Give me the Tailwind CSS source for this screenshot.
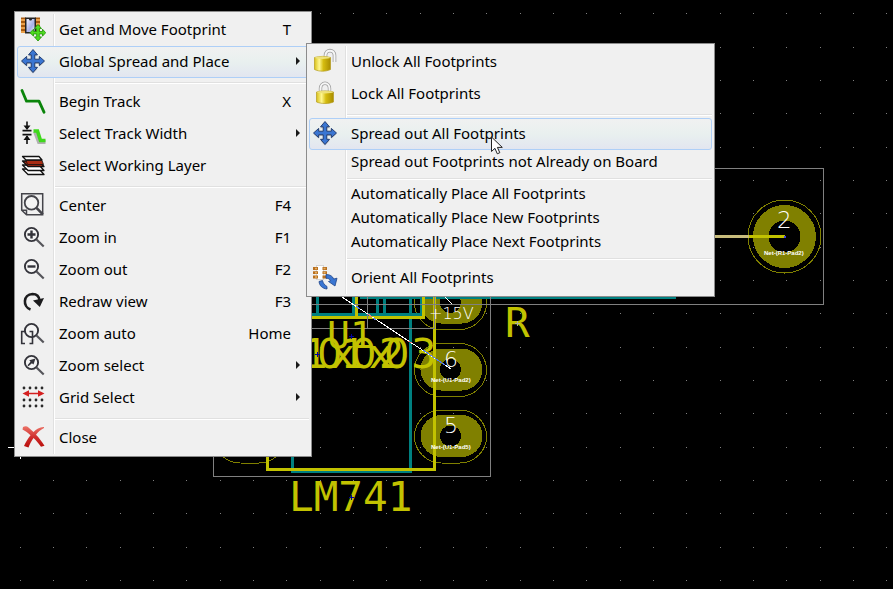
<!DOCTYPE html>
<html lang="en">
<head>
<meta charset="utf-8">
<title>Board editor</title>
<script src="https://cdn.jsdelivr.net/npm/@tailwindcss/browser@4"></script>
</head>
<body class="relative min-h-screen overflow-hidden bg-black font-['Noto_Sans','Open_Sans',sans-serif] text-[15px] text-black">

<!-- Board canvas -->
<svg class="absolute inset-0 h-full w-full" shape-rendering="crispEdges" aria-label="Board canvas">
  <defs>
    <pattern id="grid" width="100" height="100" patternUnits="userSpaceOnUse">
      <g fill="#808080">
        <rect x="20" y="13" width="1" height="1"/><rect x="53" y="13" width="1" height="1"/><rect x="86" y="13" width="1" height="1"/>
        <rect x="20" y="47" width="1" height="1"/><rect x="53" y="47" width="1" height="1"/><rect x="86" y="47" width="1" height="1"/>
        <rect x="20" y="80" width="1" height="1"/><rect x="53" y="80" width="1" height="1"/><rect x="86" y="80" width="1" height="1"/>
      </g>
    </pattern>
    <g id="pad">
      <rect x="-36" y="-26" width="72" height="53" rx="27" fill="none" stroke="#808000"/>
      <rect x="-30" y="-21" width="62" height="42" rx="21" fill="#808000"/>
      <circle cx="0" cy="0" r="10.5" fill="#000"/>
    </g>
    <path id="anchor" d="M-2 0H3M.5 -2.500V2.500" stroke="#0000a0" fill="none"/>
  </defs>
  <rect width="100%" height="100%" fill="url(#grid)"/>

  <!-- Pads -->
  <use href="#pad" x="450.500" y="302.500"/>
  <use href="#pad" x="450.500" y="369.500"/>
  <use href="#pad" x="450.500" y="436"/>
  <use href="#pad" x="249.500" y="436"/>
  <circle cx="784.5" cy="236.500" r="36.5" fill="none" stroke="#808000"/>
  <circle cx="784.5" cy="236.5" r="31.500" fill="#808000"/>
  <circle cx="784.5" cy="236.5" r="16" fill="#000"/>

  <!-- Fabrication layer -->
  <g fill="none" stroke="#008080" stroke-width="3">
    <path d="M292.500 440V471.500H410.500V290M312 314.500H421.500V290M317.500 290V314M353.500 290V314M377.500 298V314M384.500 298V314M360 297.500H676"/>
  </g>
  <!-- Silkscreen layer -->
  <g fill="none" stroke="#c2c200" stroke-width="3">
    <path d="M267.500 440V469.500H434.500V290M312 317.500H423.500V290M356.500 290V317"/>
    <path d="M748 236.500H785"/>
  </g>
  <path d="M715 236.500H749" stroke="#c8bc7c" stroke-width="3"/>
  <rect x="784" y="236" width="2" height="2" fill="#4040e0"/>

  <!-- Courtyards -->
  <g fill="none" stroke="#808080">
    <path d="M700 168.500H823.500V304.500H312M367.500 290V328M312 328.500H434.500V290M213.500 440V476.500H490.500V290"/>
  </g>

  <!-- Silkscreen texts -->
  <g fill="#c2c200" font-family="DejaVu Sans Mono, monospace" font-size="41">
    <text x="289" y="511">LM741</text>
    <text x="505" y="337">R</text>
    <text x="327" y="348" font-size="38">U1</text>
    <g font-family="DejaVu Sans, sans-serif" font-size="40">
      <text x="303" y="368">1</text>
      <text x="317" y="368">0</text>
      <text x="331" y="368">x</text>
      <text x="341" y="368">1</text>
      <text x="351" y="368">0</text>
      <text x="369" y="368">x</text>
      <text x="379" y="368">2</text>
      <text x="384" y="368">0</text>
      <text x="411" y="368">3</text>
    </g>
  </g>
  <use href="#anchor" x="351" y="336.500"/>
  <use href="#anchor" x="317" y="354.500"/>
  <use href="#anchor" x="351" y="497.500"/>
  <path d="M515 323.500H520M517.500 321V326" stroke="#b0b0a0"/>

  <!-- Pad names and nets -->
  <g fill="#fff" font-family="DejaVu Sans, sans-serif" font-weight="200">
    <text x="777" y="228" font-size="23">2</text>
    <text x="444" y="367" font-size="22">6</text>
    <text x="444" y="433" font-size="22">5</text>
    <text x="429" y="319" font-size="16">+15V</text>
    <g font-size="6" font-weight="700" font-family="Liberation Sans, sans-serif">
      <text x="764" y="255">Net-(R1-Pad2)</text>
      <text x="431" y="382">Net-(U1-Pad2)</text>
      <text x="431" y="449">Net-(U1-Pad5)</text>
    </g>
  </g>

  <!-- Ratsnest -->
  <path d="M342 297L451 369M445 297L452 304" stroke="#fff" fill="none"/>
  <path d="M368 314L372 317M408 341L412 343" stroke="#f08080"/>
  <path d="M356 306L360 309M373 318L376 320M423 350L445 365" stroke="#5078f0"/>

  <!-- Crosshair -->
  <path d="M8 447.500H33M20.500 435V459" stroke="#fff"/>
</svg>

<!-- Icons shared by several menu items -->
<svg class="absolute h-0 w-0" aria-hidden="true">
  <defs>
    <linearGradient id="gold" x1="0" x2="1" y1="0" y2="0"><stop offset="0" stop-color="#d8c018"/><stop offset=".3" stop-color="#fff790"/><stop offset=".55" stop-color="#d6bd10"/><stop offset="1" stop-color="#a88c00"/></linearGradient>
    <linearGradient id="red" x1="0" x2="0" y1="0" y2="1"><stop offset="0" stop-color="#ec7468"/><stop offset=".5" stop-color="#d03030"/><stop offset="1" stop-color="#b80c08"/></linearGradient>
    <linearGradient id="sheet" x1="0" x2="1" y1="0" y2="1"><stop offset="0" stop-color="#f0f0ff"/><stop offset=".6" stop-color="#a8b0e8"/><stop offset="1" stop-color="#e8ecff"/></linearGradient>
    <symbol id="move" viewBox="0 0 26 26">
      <path d="M13 3l5 5.200h-3v4.300h4.500v-3l5 4.500-5 4.700V16H15v4.500h3L13 25.500 8 20.500h3V16H6.500v2.700L1.500 14l5-4.500v3H11V8.200H8z" fill="#9a9a9a" opacity=".5"/>
      <path d="M13 1.500l4.500 5.300h-2.700v4.400h4.500V8.400l5.200 4.600-5.200 4.600v-2.800h-4.500v4.500h2.700L13 24.500l-4.500-5.200h2.700v-4.500H6.700v2.800L1.500 13l5.200-4.600v2.800h4.500V6.800H8.500z" fill="#3a76d2" stroke="#1b3468" stroke-width=".9" stroke-linejoin="round"/>
    </symbol>
    <symbol id="lens" viewBox="0 0 26 26">
      <circle cx="11.500" cy="10.500" r="6.600" fill="#f4f4f4" stroke="#33333a" stroke-width="1.900"/>
      <path d="M16.500 15.500l7.200 7" stroke="#55555a" stroke-width="2.200"/>
    </symbol>
  </defs>
</svg>

<!-- Main context menu -->
<div role="menu" aria-label="Board" class="absolute left-[14px] top-[11px] flex w-[298px] flex-col border border-[#8c8c8c] bg-[#f0f0f0] p-[2px]">
  <div class="pointer-events-none absolute inset-y-[2px] left-[38px] w-[2px] border-l border-[#e0e0e0] bg-white"></div>

  <button role="menuitem" class="relative flex h-8 items-center pb-[2px] pl-[3px] pr-[18px]">
    <svg class="mr-[13px] h-[26px] w-[26px]" viewBox="0 0 26 26">
      <path d="M1 1.500h5v15.500H1zM15 1.500h5v15.500h-5z" fill="#a85a10"/>
      <path d="M1 4h4M1 8h4M1 12h4M1 16h4M16 4h4M16 8h4M16 12h4" stroke="#ffb860" stroke-width="1.500"/>
      <rect x="5" y="1.500" width="11" height="16" fill="#222"/>
      <path d="M6.500 3h2.500c0 2 3 2 3 0h2.500v13h-8z" fill="url(#sheet)"/>
      <path d="M18 8.500l3.500 4h-2.200v3h3.200v-2.300l3.200 3.500-3.200 3.500v-2.300h-3.200v3h2.200L18 25l-3.500-4.100h2.200v-3h-3.200v2.300L10 16.700l3.500-3.500v2.300h3.200v-3h-2.200z" fill="#4fdc20" stroke="#2a9a10" stroke-width=".9"/>
    </svg>
    <span class="flex-1 text-left">Get and Move Footprint</span><kbd class="font-[inherit]">T</kbd>
  </button>

  <button role="menuitem" aria-haspopup="menu" aria-expanded="true" class="relative flex h-8 items-center rounded-[3px] border border-[#aecff7] bg-linear-to-b from-[#f0f1f1] via-[#e9f0ef] to-[#e2e6f0] pb-[2px] pl-[2px] pr-[8px]">
    <svg class="mr-[13px] h-[26px] w-[26px]"><use href="#move"/></svg>
    <span class="flex-1 text-left">Global Spread and Place</span>
    <svg class="h-2 w-1" viewBox="0 0 4 8"><path d="M0 0l4 4-4 4z" fill="#1a1a1a"/></svg>
  </button>

  <div role="separator" class="ml-[38px] h-2 pt-1"><div class="h-[2px] border-t border-[#e0e0e0] bg-white"></div></div>

  <button role="menuitem" class="relative flex h-8 items-center pb-[2px] pl-[3px] pr-[18px]">
    <svg class="mr-[13px] h-[26px] w-[26px]" viewBox="0 0 26 26"><path d="M2 2.500l4.500 10.700h12.500l5 11" fill="none" stroke="#0a840a" stroke-width="2.800" stroke-linecap="round" stroke-linejoin="round"/></svg>
    <span class="flex-1 text-left">Begin Track</span><kbd class="font-[inherit]">X</kbd>
  </button>

  <button role="menuitem" aria-haspopup="menu" class="relative flex h-8 items-center pb-[2px] pl-[3px] pr-[9px]">
    <svg class="mr-[13px] h-[26px] w-[26px]" viewBox="0 0 26 26">
      <path d="M15 11.500l4 10.500h6.500" fill="none" stroke="#b0b0b0" stroke-width="4"/>
      <path d="M2.500 10.600h9M2.500 14.600h9M7 1.500v7M7 16v8" stroke="#111" stroke-width="1.600"/>
      <path d="M3.500 5.500h7L7 10zM3.500 20h7L7 15.200z" fill="#111"/>
      <path d="M13.500 11h4l3 9.500h5" fill="none" stroke="#3fd81c" stroke-width="3.600"/>
    </svg>
    <span class="flex-1 text-left">Select Track Width</span>
    <svg class="h-2 w-1" viewBox="0 0 4 8"><path d="M0 0l4 4-4 4z" fill="#1a1a1a"/></svg>
  </button>

  <button role="menuitem" class="relative flex h-8 items-center pb-[2px] pl-[3px] pr-[18px]">
    <svg class="mr-[13px] h-[26px] w-[26px]" viewBox="0 0 26 26" stroke="#111" stroke-width="1.300" stroke-linejoin="round">
      <path d="M2.500 17h16.500l5 5.500H8z" fill="#fff"/>
      <path d="M2.500 13h16.500l5 5.500H8z" fill="#fff"/>
      <path d="M2.500 9h16.500l5 5.500H8z" fill="#b02810"/>
      <path d="M2.500 4.500h16.500l3 3.500H6z" fill="#fff"/>
      <path d="M6 8.500h16l1.500 4H7.500z" fill="#a82c14" stroke-width=".8"/>
    </svg>
    <span class="flex-1 text-left">Select Working Layer</span>
  </button>

  <div role="separator" class="ml-[38px] h-2 pt-1"><div class="h-[2px] border-t border-[#e0e0e0] bg-white"></div></div>

  <button role="menuitem" class="relative flex h-8 items-center pb-[2px] pl-[3px] pr-[18px]">
    <svg class="mr-[13px] h-[26px] w-[26px]" viewBox="0 0 26 26" fill="none" stroke="#44444a">
      <path d="M1.700 1.700h21v21H6.500l-4.800-4.500zM1.700 18.200h4.800v4.500" stroke-width="1.500"/>
      <circle cx="11.500" cy="10.800" r="6.800" stroke-width="1.800" fill="#f4f4f4"/>
      <path d="M16.500 15.800l6.300 6.500" stroke-width="2.600"/>
    </svg>
    <span class="flex-1 text-left">Center</span><kbd class="font-[inherit]">F4</kbd>
  </button>
  <button role="menuitem" class="relative flex h-8 items-center pb-[2px] pl-[3px] pr-[18px]">
    <svg class="mr-[13px] h-[26px] w-[26px]" viewBox="0 0 26 26"><use href="#lens"/><path d="M7.500 10.500h8M11.500 6.500v8" stroke="#33333a" stroke-width="2.400"/></svg>
    <span class="flex-1 text-left">Zoom in</span><kbd class="font-[inherit]">F1</kbd>
  </button>
  <button role="menuitem" class="relative flex h-8 items-center pb-[2px] pl-[3px] pr-[18px]">
    <svg class="mr-[13px] h-[26px] w-[26px]" viewBox="0 0 26 26"><use href="#lens"/><path d="M7.500 10.500h8" stroke="#33333a" stroke-width="2.400"/></svg>
    <span class="flex-1 text-left">Zoom out</span><kbd class="font-[inherit]">F2</kbd>
  </button>
  <button role="menuitem" class="relative flex h-8 items-center pb-[2px] pl-[3px] pr-[18px]">
    <svg class="mr-[13px] h-[26px] w-[26px]" viewBox="0 0 26 26"><path d="M10.500 21.500C2.500 18.500 3 6.500 12.500 6c4.500 0 6.800 3 7.200 7" fill="none" stroke="#1c1c1e" stroke-width="2.600"/><path d="M13 12.500l11-2.500-4.200 9z" fill="#1c1c1e"/></svg>
    <span class="flex-1 text-left">Redraw view</span><kbd class="font-[inherit]">F3</kbd>
  </button>
  <button role="menuitem" class="relative flex h-8 items-center pb-[2px] pl-[3px] pr-[18px]">
    <svg class="mr-[13px] h-[26px] w-[26px]" viewBox="0 0 26 26"><use href="#lens"/><path d="M5 11.500H1.700v12H5M9.500 11.500h3v12h-3" fill="none" stroke="#33333a" stroke-width="1.600"/></svg>
    <span class="flex-1 text-left">Zoom auto</span><kbd class="font-[inherit]">Home</kbd>
  </button>
  <button role="menuitem" aria-haspopup="menu" class="relative flex h-8 items-center pb-[2px] pl-[3px] pr-[9px]">
    <svg class="mr-[13px] h-[26px] w-[26px]" viewBox="0 0 26 26"><use href="#lens"/><path d="M15.500 6.500l-2 6-1.600-1.300-3.400 3-1-1 3-3.400L9.300 8.200z" fill="#33333a"/></svg>
    <span class="flex-1 text-left">Zoom select</span>
    <svg class="h-2 w-1" viewBox="0 0 4 8"><path d="M0 0l4 4-4 4z" fill="#1a1a1a"/></svg>
  </button>
  <button role="menuitem" aria-haspopup="menu" class="relative flex h-8 items-center pb-[2px] pl-[3px] pr-[9px]">
    <svg class="mr-[13px] h-[26px] w-[26px]" viewBox="0 0 26 26">
      <path d="M4 4h19M4 16h19M4 22h19" stroke="#2a2a2a" stroke-width="2.800" stroke-linecap="round" stroke-dasharray="0 6"/>
      <path d="M5 9.500h17" stroke="#d42020" stroke-width="1.500"/><path d="M2.500 9.500l6.500-3.300v6.600zM24.500 9.500L18 6.200v6.600z" fill="#d42020"/>
    </svg>
    <span class="flex-1 text-left">Grid Select</span>
    <svg class="h-2 w-1" viewBox="0 0 4 8"><path d="M0 0l4 4-4 4z" fill="#1a1a1a"/></svg>
  </button>

  <div role="separator" class="ml-[38px] h-2 pt-1"><div class="h-[2px] border-t border-[#e0e0e0] bg-white"></div></div>

  <button role="menuitem" class="relative flex h-8 items-center pb-[2px] pl-[3px] pr-[18px]">
    <svg class="mr-[13px] h-[26px] w-[26px]" viewBox="0 0 26 26"><path d="M3 3c2-1 4-1 5.500.5l5 4.500c3-2.800 6.500-5.300 10.500-5v1c-3.500 1.700-6 4-8 6.800 3 3 5.500 6.500 8.500 11l-3.500 1c-2.500-3.500-5-6.500-7.500-8.800-2 2.800-3.700 6-5 9.500L4 22c1.500-4 4-7.500 6.500-10.800C8 8.500 5.500 7 2.500 5.500z" fill="url(#red)"/></svg>
    <span class="flex-1 text-left">Close</span>
  </button>
</div>

<!-- Submenu -->
<div role="menu" aria-label="Global Spread and Place" class="absolute left-[306px] top-[43px] flex w-[409px] flex-col border border-[#8c8c8c] bg-[#f0f0f0] p-[2px]">
  <div class="pointer-events-none absolute inset-y-[2px] left-[38px] w-[2px] border-l border-[#e0e0e0] bg-white"></div>

  <button role="menuitem" class="relative flex h-8 items-center pb-[2px] pl-[3px]">
    <svg class="mr-[13px] h-[26px] w-[26px]" viewBox="0 0 26 26">
      <path d="M13.500 10V7.500c0-6.500 9-6.500 9 0V14" fill="none" stroke="#a0a0a0" stroke-width="3.600"/>
      <path d="M13.500 10V7.500c0-6.500 9-6.500 9 0V14" fill="none" stroke="#f6f6f6" stroke-width="2"/>
      <path d="M2.500 9.500c5-1.500 11-1.500 16 0v12c-5 2.300-11 2.300-16 0z" fill="url(#gold)" stroke="#b49c20" stroke-width=".7"/>
      <ellipse cx="10.500" cy="9.700" rx="7.500" ry="1.300" fill="#eee27c"/>
    </svg>
    <span>Unlock All Footprints</span>
  </button>
  <button role="menuitem" class="relative flex h-8 items-center pb-[2px] pl-[3px]">
    <svg class="mr-[13px] h-[26px] w-[26px]" viewBox="0 0 26 26">
      <path d="M8.500 13V8.500c0-7 9-7 9 0V13" fill="none" stroke="#a0a0a0" stroke-width="3.400"/>
      <path d="M8.500 13V8.500c0-7 9-7 9 0V13" fill="none" stroke="#f6f6f6" stroke-width="1.900"/>
      <path d="M4.500 12c5-1.500 12-1.500 17 0v10c-5 2-12 2-17 0z" fill="url(#gold)" stroke="#b49c20" stroke-width=".7"/>
      <ellipse cx="13" cy="12.200" rx="8" ry="1.300" fill="#eee27c"/>
    </svg>
    <span>Lock All Footprints</span>
  </button>

  <div role="separator" class="ml-[38px] h-2 pt-1"><div class="h-[2px] border-t border-[#e0e0e0] bg-white"></div></div>

  <button role="menuitem" class="relative flex h-8 items-center rounded-[3px] border border-[#aecff7] bg-linear-to-b from-[#f0f1f1] via-[#e9f0ef] to-[#e2e6f0] pb-[2px] pl-[2px]">
    <svg class="mr-[13px] h-[26px] w-[26px]"><use href="#move"/></svg>
    <span>Spread out All Footprints</span>
  </button>
  <button role="menuitem" class="relative flex h-6 items-center pb-[2px] pl-[42px]">Spread out Footprints not Already on Board</button>

  <div role="separator" class="ml-[38px] h-2 pt-1"><div class="h-[2px] border-t border-[#e0e0e0] bg-white"></div></div>

  <button role="menuitem" class="relative flex h-6 items-center pb-[2px] pl-[42px]">Automatically Place All Footprints</button>
  <button role="menuitem" class="relative flex h-6 items-center pb-[2px] pl-[42px]">Automatically Place New Footprints</button>
  <button role="menuitem" class="relative flex h-6 items-center pb-[2px] pl-[42px]">Automatically Place Next Footprints</button>

  <div role="separator" class="ml-[38px] h-2 pt-1"><div class="h-[2px] border-t border-[#e0e0e0] bg-white"></div></div>

  <button role="menuitem" class="relative flex h-8 items-center pb-[2px] pl-[3px]">
    <svg class="mr-[13px] h-[26px] w-[26px]" viewBox="0 0 26 26">
      <rect x="4.500" y="1.500" width="7" height="14" fill="#fff" stroke="#999" stroke-width=".7" stroke-dasharray="1 1"/>
      <path d="M1 4.500h5M1 8.700h5M1 13h5M10.500 4.500h4.500M10.500 8.700h4.500M10.500 13h4.500" stroke="#b87020" stroke-width="2.800"/>
      <path d="M3 4.500h2M3 8.700h2M3 13h2M11.500 4.500h2M11.500 8.700h2" stroke="#e8b060" stroke-width="1.400"/>
      <path d="M14 10.500c4 0 6.500 1.500 7.700 4.500l3.300-.8-2 7.800-6.500-4.500 2-.8c-1-1.800-2.500-2.500-4.500-2.500z" fill="#3a76d2" stroke="#1f4488" stroke-width=".8"/>
      <path d="M7 17.500l3.500-1c.5 2.500 2 4.500 4.500 6v2.500C10.500 24.500 7.500 22 7 17.500z" fill="#3a76d2" stroke="#1f4488" stroke-width=".8"/>
    </svg>
    <span>Orient All Footprints</span>
  </button>
</div>

<!-- Mouse pointer -->
<svg class="pointer-events-none absolute left-[491px] top-[136px] h-[19px] w-3" viewBox="0 0 12 19"><path d="M.5 1v14.500l3.400-3.200 2.400 5.500 2.500-1.100-2.400-5.300h4.900z" fill="#fff" stroke="#222"/></svg>
</body>
</html>
